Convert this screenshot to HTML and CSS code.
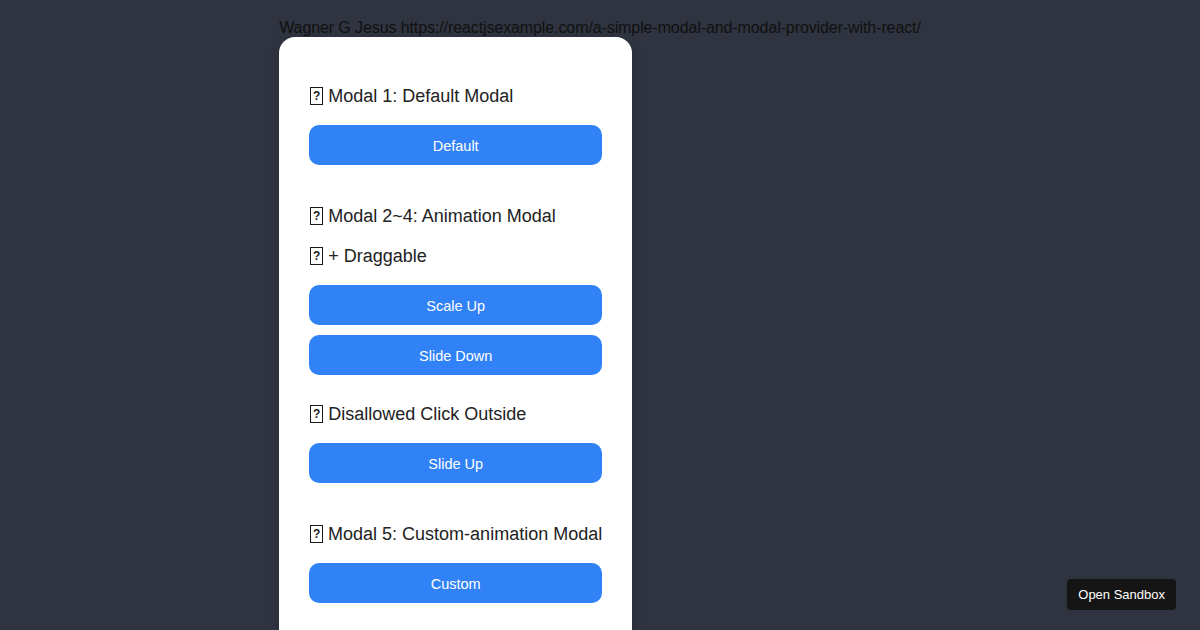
FILE: index.html
```html
<!DOCTYPE html>
<html>
<head>
<meta charset="utf-8">
<link rel="stylesheet" href="styles.css">
</head>
<body>
<div class="wrap">
  <div class="title">Wagner G Jesus https://reactjsexample.com/a-simple-modal-and-modal-provider-with-react/</div>
  <div class="card">
    <section class="group">
      <h3 class="head"><span class="tofu">?</span> Modal 1: Default Modal</h3>
      <button class="btn">Default</button>
    </section>
    <section class="group">
      <h3 class="head"><span class="tofu">?</span> Modal 2~4: Animation Modal</h3>
      <h3 class="head"><span class="tofu">?</span> + Draggable</h3>
      <button class="btn">Scale Up</button>
      <button class="btn">Slide Down</button>
      <h3 class="head head-tight"><span class="tofu">?</span> Disallowed Click Outside</h3>
      <button class="btn">Slide Up</button>
    </section>
    <section class="group">
      <h3 class="head"><span class="tofu">?</span> Modal 5: Custom-animation Modal</h3>
      <button class="btn">Custom</button>
    </section>
  </div>
</div>
<a class="sandbox">Open Sandbox</a>
</body>
</html>
```
FILE: styles.css
```css
html, body {
  margin: 0;
  padding: 0;
  height: 100%;
  overflow: hidden;
}
body {
  background: #2f3440;
  font-family: "Liberation Sans", Arial, sans-serif;
}
.wrap {
  width: fit-content;
  margin: 0 auto;
  padding-top: 18px;
  display: flex;
  flex-direction: column;
  align-items: flex-start;
}
.title {
  font-size: 16px;
  line-height: 19px;
  color: #111;
  letter-spacing: -0.1px;
}
.card {
  background: #fff;
  border-radius: 16px;
  width: 293px;
  padding: 49px 30px 60px;
  display: flex;
  flex-direction: column;
  gap: 41px;
  box-shadow: 0 2px 10px rgba(0,0,0,0.15);
}
.group {
  display: flex;
  flex-direction: column;
}
.head {
  margin: 0 0 19px;
  font-size: 18px;
  line-height: 20px;
  font-weight: normal;
  color: #222;
  display: flex;
  align-items: center;
  white-space: nowrap;
}
.head + .head {
  margin-top: 1px;
}
.head-tight {
  margin-top: 29px;
}
.tofu {
  display: inline-flex;
  align-items: center;
  justify-content: center;
  box-sizing: border-box;
  width: 13px;
  height: 18px;
  border: 1.5px solid #1a1a1a;
  font-size: 12px;
  font-weight: bold;
  line-height: 1;
  color: #1a1a1a;
  margin-right: 5px;
  margin-left: 1px;
}
.btn {
  display: block;
  height: 40px;
  width: 293px;
  border: 0;
  border-radius: 10px;
  background: #3182f6;
  color: #fff;
  font-family: "Liberation Sans", Arial, sans-serif;
  font-size: 14.5px;
  padding: 2px 0 0;
}
.btn + .btn {
  margin-top: 10px;
}
.sandbox {
  position: fixed;
  right: 24px;
  bottom: 20px;
  background: #151515;
  color: #fff;
  font-size: 13px;
  border-radius: 4px;
  padding: 0 11px;
  height: 31px;
  line-height: 31px;
  font-family: "Liberation Sans", Arial, sans-serif;
}
```
